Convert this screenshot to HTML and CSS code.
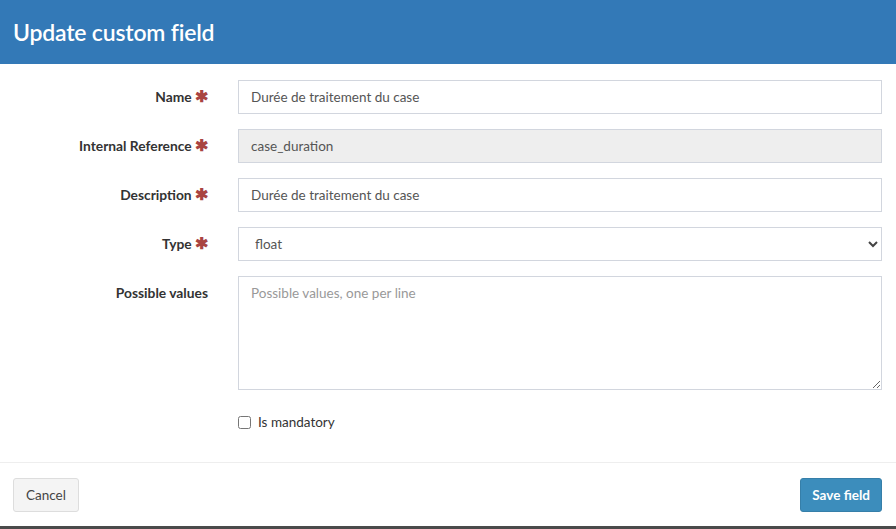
FILE: index.html
```html
<!DOCTYPE html>
<html lang="fr">
<head>
<meta charset="utf-8">
<title>Update custom field</title>
<link rel="stylesheet" href="styles.css">
</head>
<body>
<div class="modal">
  <div class="modal-header">
    <h4 class="modal-title">Update custom field</h4>
  </div>
  <form class="modal-body">
    <div class="form-row">
      <label class="form-label">Name <span class="req">&#10033;</span></label>
      <input class="form-control" type="text" value="Durée de traitement du case">
    </div>
    <div class="form-row">
      <label class="form-label">Internal Reference <span class="req">&#10033;</span></label>
      <input class="form-control" type="text" value="case_duration" disabled>
    </div>
    <div class="form-row">
      <label class="form-label">Description <span class="req">&#10033;</span></label>
      <input class="form-control" type="text" value="Durée de traitement du case">
    </div>
    <div class="form-row">
      <label class="form-label">Type <span class="req">&#10033;</span></label>
      <select class="form-control form-select">
        <option>float</option>
      </select>
    </div>
    <div class="form-row">
      <label class="form-label">Possible values</label>
      <textarea class="form-control form-textarea" placeholder="Possible values, one per line"></textarea>
    </div>
    <div class="form-row">
      <span></span>
      <label class="check"><input type="checkbox" class="check-box"> Is mandatory</label>
    </div>
  </form>
  <div class="modal-footer">
    <button type="button" class="btn btn-default">Cancel</button>
    <button type="button" class="btn btn-primary">Save field</button>
  </div>
</div>
<div class="backdrop-strip"></div>
</body>
</html>
```
FILE: styles.css
```css
html, body {
  margin: 0;
  padding: 0;
  background: #ffffff;
}
body {
  font-family: Lato, "Open Sans", "Liberation Sans", sans-serif;
  font-size: 14px;
  color: #333;
  height: 529px;
  overflow: hidden;
  display: flex;
  flex-direction: column;
}
.modal {
  height: 526px;
  display: flex;
  flex-direction: column;
  background: #fff;
}
.modal-header {
  background: #3379b7;
  height: 64px;
  box-sizing: border-box;
  padding: 0 13px;
  display: flex;
  align-items: center;
}
.modal-title {
  margin: 0;
  color: #fff;
  font-size: 23px;
  font-weight: 600;
  letter-spacing: -0.2px;
}
.modal-body {
  flex: 1;
  padding: 16px 14px 0 0;
  display: flex;
  flex-direction: column;
  gap: 15px;
}
.form-row {
  display: grid;
  grid-template-columns: 208px 1fr;
  column-gap: 30px;
  align-items: start;
}
.form-label {
  text-align: right;
  font-weight: 700;
  font-size: 13.8px;
  padding-top: 8px;
  color: #333;
  white-space: nowrap;
}
.req {
  color: #a94442;
  font-size: 16px;
  line-height: 1;
}
.form-control {
  box-sizing: border-box;
  height: 34px;
  width: 100%;
  border: 1px solid #d2d6de;
  background: #fff;
  padding: 0 12px;
  font-family: inherit;
  font-size: 13.5px;
  color: #555;
  outline: none;
  border-radius: 0;
}
.form-control:disabled {
  background: #eee;
  color: #555;
}
.form-select {
  appearance: none;
  -webkit-appearance: none;
  padding-left: 16px;
  background: #fff url("data:image/svg+xml;utf8,<svg xmlns='http://www.w3.org/2000/svg' width='10' height='8' viewBox='0 0 10 8'><path d='M1 2 L5 6 L9 2' fill='none' stroke='%23444' stroke-width='2'/></svg>") no-repeat right 3px center;
}
.form-textarea {
  height: 114px;
  padding: 8px 12px;
  resize: vertical;
}
.form-textarea::placeholder {
  color: #999;
}
.check {
  display: flex;
  align-items: center;
  gap: 7px;
  font-size: 13.5px;
  color: #333;
  padding-top: 9px;
}
.check-box {
  margin: 0;
  width: 13px;
  height: 13px;
}
.modal-footer {
  border-top: 1px solid #eeeeee;
  height: 64px;
  box-sizing: border-box;
  padding: 0 14px 0 13px;
  display: flex;
  align-items: center;
  justify-content: space-between;
}
.btn {
  height: 34px;
  box-sizing: border-box;
  padding: 0 12px;
  border-radius: 3px;
  font-family: inherit;
  font-size: 13.5px;
}
.btn-default {
  background: #f4f4f4;
  border: 1px solid #ddd;
  color: #444;
}
.btn-primary {
  background: #3c8dbc;
  border: 1px solid #367fa9;
  color: #fff;
  font-weight: 700;
  padding: 0 11px;
}
.backdrop-strip {
  height: 3px;
  background: #4a4a4a;
}
```
